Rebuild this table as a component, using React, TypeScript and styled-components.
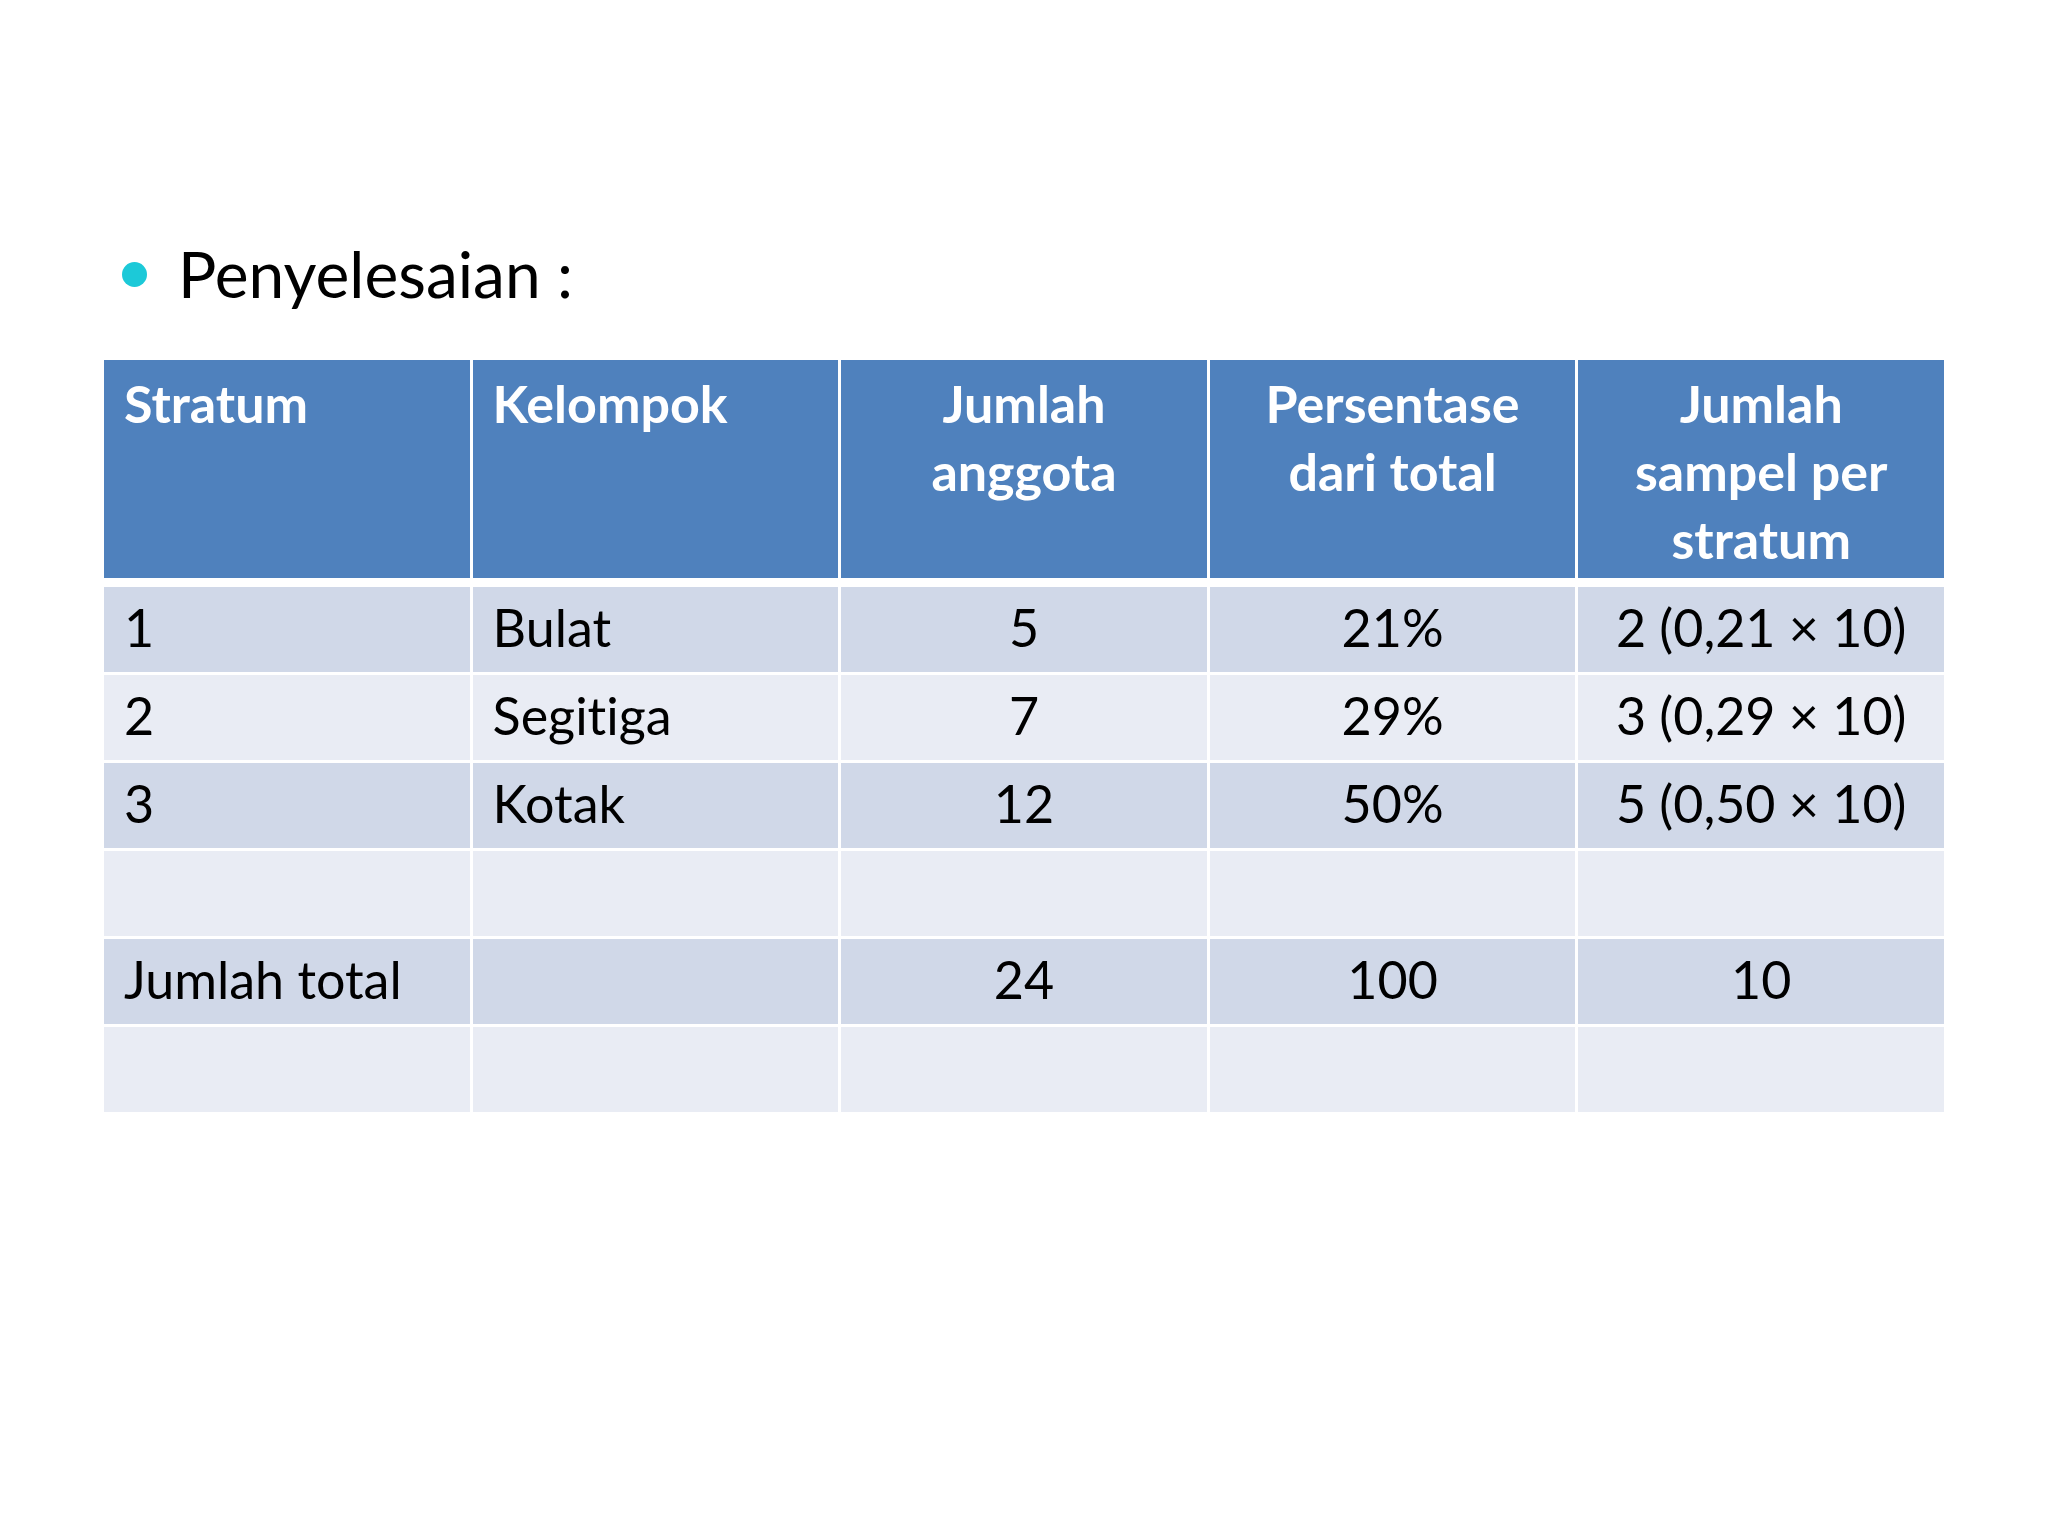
import React from 'react';
import styled, { createGlobalStyle } from 'styled-components';

const GlobalStyle = createGlobalStyle`
  html, body {
    margin: 0;
    padding: 0;
    background: #ffffff;
  }
  body {
    font-family: Lato, "Open Sans", "Liberation Sans", sans-serif;
    font-variant-ligatures: none;
    color: #000000;
  }
`;

const Page = styled.div`
  width: 2048px;
  min-height: 1536px;
  padding: 235px 0 0 104px;
  box-sizing: border-box;
`;

const TitleRow = styled.div`
  display: flex;
  align-items: center;
  height: 78px;
  padding-left: 18px;
  margin-bottom: 47px;
`;

const Bullet = styled.span`
  width: 25px;
  height: 25px;
  border-radius: 50%;
  background: #1cc9d8;
  flex: none;
`;

const TitleText = styled.h1`
  margin: 0 0 0 31px;
  font-size: 64px;
  font-weight: 400;
  line-height: 78px;
  color: #000000;
`;

const Table = styled.div`
  display: grid;
  grid-template-columns: repeat(5, 1fr);
  column-gap: 3px;
  row-gap: 3px;
  width: 1840px;
`;

const HeadCell = styled.div<{ $align: 'left' | 'center' }>`
  background: #4f81bd;
  color: #ffffff;
  font-weight: 700;
  font-size: 52px;
  line-height: 68px;
  height: 218px;
  box-sizing: border-box;
  padding: 9px 20px 0;
  margin-bottom: 6px;
  text-align: ${(p) => p.$align};
`;

const BodyCell = styled.div<{ $align: 'left' | 'center'; $dark: boolean }>`
  background: ${(p) => (p.$dark ? '#d0d8e8' : '#e9ecf4')};
  font-size: 52px;
  line-height: 64px;
  height: 85px;
  box-sizing: border-box;
  padding: 8px 20px 0;
  text-align: ${(p) => p.$align};
  white-space: nowrap;
`;

const headers = [
  'Stratum',
  'Kelompok',
  'Jumlah anggota',
  'Persentase dari total',
  'Jumlah sampel per stratum',
];

const rows: string[][] = [
  ['1', 'Bulat', '5', '21%', '2 (0,21 × 10)'],
  ['2', 'Segitiga', '7', '29%', '3 (0,29 × 10)'],
  ['3', 'Kotak', '12', '50%', '5 (0,50 × 10)'],
  ['', '', '', '', ''],
  ['Jumlah total', '', '24', '100', '10'],
  ['', '', '', '', ''],
];

const alignFor = (col: number): 'left' | 'center' => (col < 2 ? 'left' : 'center');

const App: React.FC = () => {
  return (
    <>
      <GlobalStyle />
      <Page>
        <TitleRow>
          <Bullet />
          <TitleText>Penyelesaian :</TitleText>
        </TitleRow>
        <Table>
          {headers.map((h, i) => (
            <HeadCell key={h} $align={alignFor(i)}>
              {h}
            </HeadCell>
          ))}
          {rows.map((row, r) =>
            row.map((cell, c) => (
              <BodyCell key={`${r}-${c}`} $align={alignFor(c)} $dark={r % 2 === 0}>
                {cell}
              </BodyCell>
            ))
          )}
        </Table>
      </Page>
    </>
  );
};

export default App;
